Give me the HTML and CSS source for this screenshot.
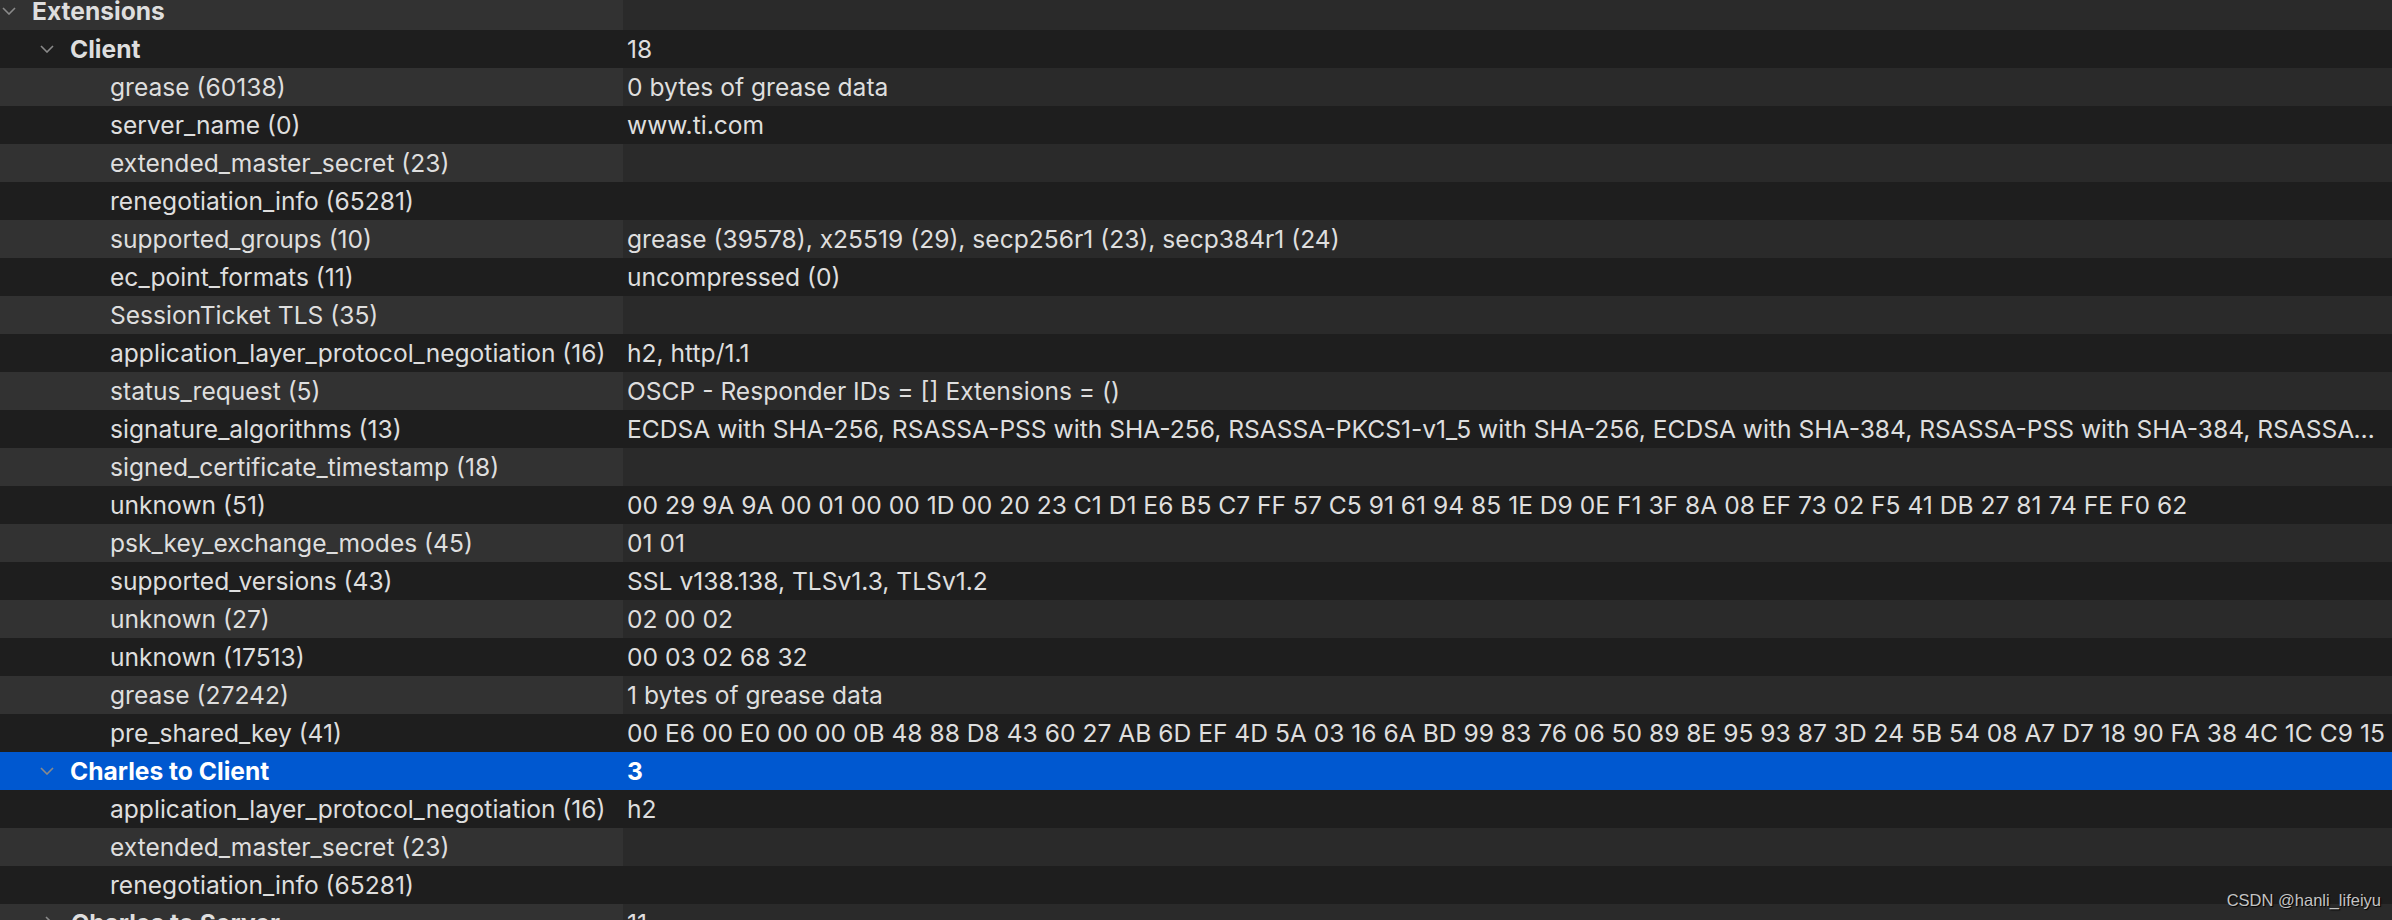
FILE: index.html
```html
<!DOCTYPE html>
<html>
<head>
<meta charset="utf-8">
<link rel="stylesheet" href="styles.css">
</head>
<body>
<div class="tree">
  <div class="row alt group">
    <div class="name l0"><svg class="chev" viewBox="0 0 14 8"><path d="M1 1 L7 7 L13 1"/></svg><span>Extensions</span></div>
    <div class="val"></div>
  </div>
  <div class="row group">
    <div class="name l1"><svg class="chev" viewBox="0 0 14 8"><path d="M1 1 L7 7 L13 1"/></svg><span>Client</span></div>
    <div class="val">18</div>
  </div>
  <div class="row alt"><div class="name l2">grease (60138)</div><div class="val">0 bytes of grease data</div></div>
  <div class="row"><div class="name l2">server_name (0)</div><div class="val">www.ti.com</div></div>
  <div class="row alt"><div class="name l2">extended_master_secret (23)</div><div class="val"></div></div>
  <div class="row"><div class="name l2">renegotiation_info (65281)</div><div class="val"></div></div>
  <div class="row alt"><div class="name l2">supported_groups (10)</div><div class="val">grease (39578), x25519 (29), secp256r1 (23), secp384r1 (24)</div></div>
  <div class="row"><div class="name l2">ec_point_formats (11)</div><div class="val">uncompressed (0)</div></div>
  <div class="row alt"><div class="name l2">SessionTicket TLS (35)</div><div class="val"></div></div>
  <div class="row"><div class="name l2">application_layer_protocol_negotiation (16)</div><div class="val">h2, http/1.1</div></div>
  <div class="row alt"><div class="name l2">status_request (5)</div><div class="val">OSCP - Responder IDs = [] Extensions = ()</div></div>
  <div class="row"><div class="name l2">signature_algorithms (13)</div><div class="val ell">ECDSA with SHA-256, RSASSA-PSS with SHA-256, RSASSA-PKCS1-v1_5 with SHA-256, ECDSA with SHA-384, RSASSA-PSS with SHA-384, RSASSA-PKCS1-v1_5 with SHA-384, ECDSA with SHA-512</div></div>
  <div class="row alt"><div class="name l2">signed_certificate_timestamp (18)</div><div class="val"></div></div>
  <div class="row"><div class="name l2">unknown (51)</div><div class="val">00 29 9A 9A 00 01 00 00 1D 00 20 23 C1 D1 E6 B5 C7 FF 57 C5 91 61 94 85 1E D9 0E F1 3F 8A 08 EF 73 02 F5 41 DB 27 81 74 FE F0 62</div></div>
  <div class="row alt"><div class="name l2">psk_key_exchange_modes (45)</div><div class="val">01 01</div></div>
  <div class="row"><div class="name l2">supported_versions (43)</div><div class="val">SSL v138.138, TLSv1.3, TLSv1.2</div></div>
  <div class="row alt"><div class="name l2">unknown (27)</div><div class="val">02 00 02</div></div>
  <div class="row"><div class="name l2">unknown (17513)</div><div class="val">00 03 02 68 32</div></div>
  <div class="row alt"><div class="name l2">grease (27242)</div><div class="val">1 bytes of grease data</div></div>
  <div class="row"><div class="name l2">pre_shared_key (41)</div><div class="val">00 E6 00 E0 00 00 0B 48 88 D8 43 60 27 AB 6D EF 4D 5A 03 16 6A BD 99 83 76 06 50 89 8E 95 93 87 3D 24 5B 54 08 A7 D7 18 90 FA 38 4C 1C C9 15 2C 7E 41 9B</div></div>
  <div class="row group sel">
    <div class="name l1"><svg class="chev" viewBox="0 0 14 8"><path d="M1 1 L7 7 L13 1"/></svg><span>Charles to Client</span></div>
    <div class="val">3</div>
  </div>
  <div class="row"><div class="name l2">application_layer_protocol_negotiation (16)</div><div class="val">h2</div></div>
  <div class="row alt"><div class="name l2">extended_master_secret (23)</div><div class="val"></div></div>
  <div class="row"><div class="name l2">renegotiation_info (65281)</div><div class="val"></div></div>
  <div class="row alt group">
    <div class="name l1"><svg class="chev right" viewBox="0 0 8 14"><path d="M1 1 L7 7 L1 13"/></svg><span>Charles to Server</span></div>
    <div class="val">11</div>
  </div>
</div>
<div class="watermark">CSDN @hanli_lifeiyu</div>
</body>
</html>
```

FILE: styles.css
```css
*, *::before, *::after { box-sizing: border-box; }
html, body {
  margin: 0;
  padding: 0;
  background: #1e1e1e;
  overflow: hidden;
  width: 2392px;
  height: 920px;
}
body {
  font-family: Inter, "Noto Sans", sans-serif;
  font-size: 24.6px;
  color: #dedede;
  position: relative;
}
.tree {
  margin-top: -8px;
  display: flex;
  flex-direction: column;
}
.row {
  display: flex;
  height: 38px;
  line-height: 38px;
  background: #1e1e1e;
  white-space: nowrap;
}
.row.alt .name { background: #323232; }
.row.alt .val { background: #2a2a2a; }
.name {
  width: 623px;
  flex: none;
  display: flex;
  align-items: center;
  overflow: hidden;
}
.val {
  flex: 1;
  min-width: 0;
  padding-left: 4px;
  overflow: hidden;
}
.val.ell {
  flex: none;
  width: 1757px;
  text-overflow: ellipsis;
}
.l0 { padding-left: 2px; }
.l1 { padding-left: 40px; }
.l2 { padding-left: 110px; }
.chev {
  width: 14px;
  height: 8px;
  fill: none;
  stroke: #8a8a8a;
  stroke-width: 1.6;
  margin-right: 16px;
  flex: none;
}
.chev.right {
  width: 8px;
  height: 14px;
  margin-left: 5px;
  margin-right: 18px;
}
.group .name span { font-weight: 700; }
.row.sel .name, .row.sel .val { background: #0058d0; color: #ffffff; }
.row.sel .val { font-weight: 700; }
.watermark {
  position: absolute;
  right: 11px;
  bottom: 10px;
  font-family: "Liberation Sans", Arial, sans-serif;
  font-size: 16.5px;
  color: #c4c4c4;
  text-shadow: 1px 1px 1px #000;
  line-height: 20px;
}
```
